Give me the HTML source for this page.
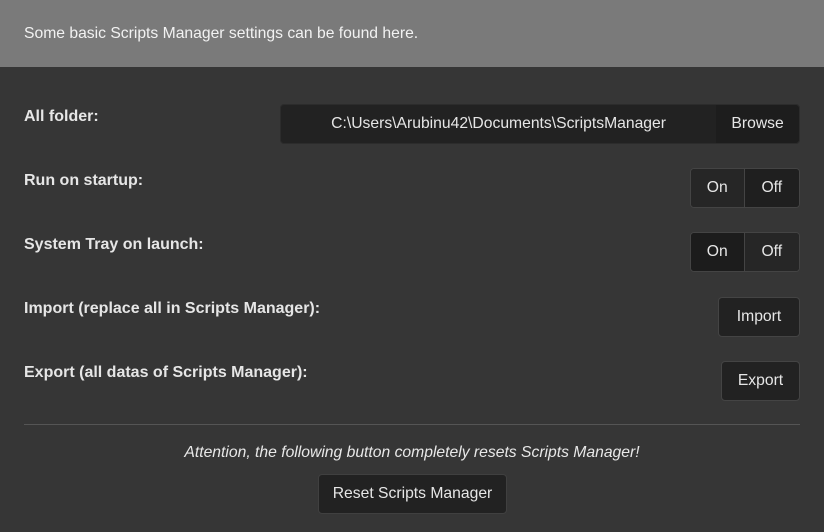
<!DOCTYPE html>
<html><head><style>
body{margin:0;width:824px;height:532px;background:#363636;font-family:"Liberation Sans",sans-serif;color:#e8e8e8;position:relative;overflow:hidden}
.a{position:absolute}
.hdr{left:0;top:0;width:824px;height:67px;background:#7a7a7a;color:#f2f2f2;font-size:15.7px}
.lbl{left:24px;font-size:16px;font-weight:bold;color:#e6e6e6}
.box{background:#222;border:1px solid #2c2c2c;border-radius:4px;box-sizing:border-box;font-size:15.7px;display:flex;align-items:center;justify-content:center;color:#e6e6e6}
.btn{border:1px solid #444}
</style></head><body>
<div class="a hdr"><div class="a" style="left:24px;top:25px">Some basic Scripts Manager settings can be found here.</div></div>

<div class="a lbl" style="top:108px">All folder:</div>
<div class="a box" style="left:280px;top:104px;width:520px;height:40px;justify-content:flex-start">
<div style="width:436px;text-align:center">C:\Users\Arubinu42\Documents\ScriptsManager</div>
<div style="width:83px;height:38px;background:#1d1d1d;display:flex;align-items:center;justify-content:center;border-radius:0 4px 4px 0">Browse</div></div>

<div class="a lbl" style="top:172px">Run on startup:</div>
<div class="a box btn" style="left:690px;top:168px;width:110px;height:40px;justify-content:flex-start;overflow:hidden">
<div style="width:53px;height:38px;background:#262626;display:flex;align-items:center;justify-content:center;border-right:1px solid #444">On</div>
<div style="width:55px;height:38px;background:#1f1f1f;display:flex;align-items:center;justify-content:center">Off</div></div>

<div class="a lbl" style="top:236px">System Tray on launch:</div>
<div class="a box btn" style="left:690px;top:232px;width:110px;height:40px;justify-content:flex-start;overflow:hidden">
<div style="width:53px;height:38px;background:#1c1c1c;display:flex;align-items:center;justify-content:center;border-right:1px solid #444">On</div>
<div style="width:55px;height:38px;background:#262626;display:flex;align-items:center;justify-content:center">Off</div></div>

<div class="a lbl" style="top:300px">Import (replace all in Scripts Manager):</div>
<div class="a box btn" style="left:718px;top:297px;width:82px;height:40px">Import</div>

<div class="a lbl" style="top:364px">Export (all datas of Scripts Manager):</div>
<div class="a box btn" style="left:721px;top:361px;width:79px;height:40px">Export</div>

<div class="a" style="left:24px;top:424px;width:776px;height:1px;background:#555"></div>
<div class="a" style="left:0;width:824px;top:444px;text-align:center;font-style:italic;font-size:15.7px">Attention, the following button completely resets Scripts Manager!</div>
<div class="a box btn" style="left:318px;top:474px;width:189px;height:40px;border-color:#404040">Reset Scripts Manager</div>
</body></html>
